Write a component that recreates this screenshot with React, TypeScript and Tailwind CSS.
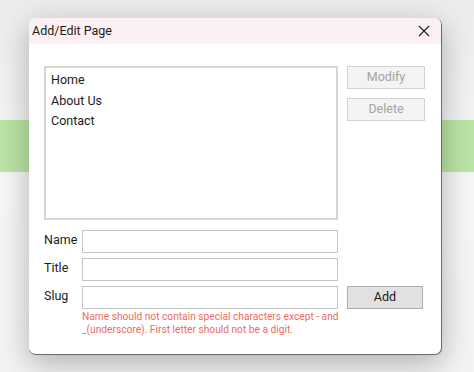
import React from "react";

const font = { fontFamily: 'Roboto, "Noto Sans", sans-serif' };

const Field = ({ label }: { label: string }) => (
  <div className="flex items-center">
    <span className="w-[38px] -mt-[3px] text-[12.5px] leading-[16px] text-[#1b1b1b]">{label}</span>
    <div className="h-[23px] w-[256px] border border-[#c4c4c4] bg-white" />
  </div>
);

export default function App() {
  return (
    <div
      className="relative h-[372px] w-[474px] overflow-hidden bg-gradient-to-b from-[#ececec] via-[#f6f6f6] to-[#f3f3f3]"
      style={font}
    >
      {/* page content behind the dialog */}
      <div className="mt-[120px] h-[52px] w-full bg-[#bae4a5]" />

      {/* dialog */}
      <div className="absolute left-[29px] top-[18px] flex h-[337px] w-[413px] flex-col overflow-hidden rounded-[7px] border-r border-b border-[#6a6a6a] bg-white shadow-[0_8px_30px_rgba(0,0,0,0.28)]">
        <div className="flex h-[26px] items-center justify-between bg-[#fcf0f4] pl-[3px] pr-[11px]">
          <span className="text-[12.5px] text-[#1b1b1b]">Add/Edit Page</span>
          <svg width="12" height="12" viewBox="0 0 12 12" className="text-[#222]">
            <path d="M1 1 L11 11 M11 1 L1 11" stroke="currentColor" strokeWidth="1.2" />
          </svg>
        </div>

        <div className="flex flex-col pl-[15px] pt-[22px]">
          <div className="flex">
            <div className="flex h-[154px] w-[294px] flex-col border-2 border-[#d6d6d6] pl-[5px] pt-[2px] text-[12.5px] leading-[20.5px] text-[#1b1b1b]">
              <span>Home</span>
              <span>About Us</span>
              <span>Contact</span>
            </div>
            <div className="ml-[9px] flex flex-col gap-[9px]">
              <button className="h-[23px] w-[78px] border border-[#d2d2d2] bg-[#f3f3f3] text-[12.5px] text-[#a3a3a3]">
                Modify
              </button>
              <button className="h-[23px] w-[78px] border border-[#d2d2d2] bg-[#f3f3f3] text-[12.5px] text-[#a3a3a3]">
                Delete
              </button>
            </div>
          </div>

          <div className="mt-[10px] flex flex-col gap-[5px]">
            <Field label="Name" />
            <Field label="Title" />
            <div className="flex items-center">
              <Field label="Slug" />
              <button className="ml-[9px] h-[23px] w-[76px] border border-[#adadad] bg-[#e1e1e1] text-[12.5px] text-[#1b1b1b]">
                Add
              </button>
            </div>
          </div>
          <p className="ml-[38px] mt-[1px] whitespace-nowrap text-[10.2px] leading-[13px] text-[#f0695f]">
            Name should not contain special characters except - and
            <br />
            _(underscore). First letter should not be a digit.
          </p>
        </div>
      </div>
    </div>
  );
}
